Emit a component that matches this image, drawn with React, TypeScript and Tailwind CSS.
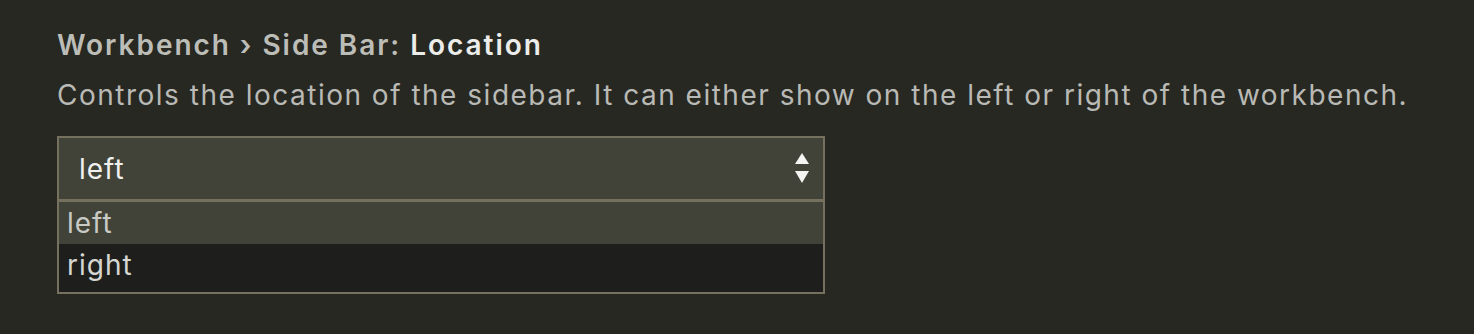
import { useState } from 'react';

const options = ['left', 'right'];

export default function App() {
  const [value] = useState('left');

  return (
    <div
      className="h-[334px] w-full bg-[#272822] pl-[57px] pt-[25px]"
      style={{ fontFamily: 'Inter, "Noto Sans", sans-serif' }}
    >
      <div className="text-[28px] font-semibold leading-[40px] tracking-[1.95px] text-[#bdbdb8]">
        Workbench › Side Bar: <span className="text-[#ececea]">Location</span>
      </div>
      <div className="mt-[10px] text-[28px] leading-[40px] tracking-[1.5px] text-[#b9b9b5]">
        Controls the location of the sidebar. It can either show on the left or right of the workbench.
      </div>

      <div className="mt-[21px] w-[768px] border-2 border-[#75715e]">
        <div className="flex h-[61px] items-center justify-between bg-[#414339] pl-[20px] pr-[12px] text-[28px] tracking-[1px] text-[#f0f0ee]">
          <span>{value}</span>
          <svg width="16" height="32" viewBox="0 0 16 32" className="mr-[1px]">
            <polygon points="8,0 15,11 1,11" fill="#f4f4f2" />
            <polygon points="1,18 15,18 8,30" fill="#f4f4f2" />
          </svg>
        </div>
        <div className="h-[3px] bg-[#75715e]" />
        <div className="text-[28px] leading-[43px] tracking-[1px]">
          {options.map((o) => (
            <div
              key={o}
              className={
                o === value
                  ? 'h-[42px] bg-[#414339] pl-[8px] text-[#c9c9c5]'
                  : 'h-[48px] bg-[#1e1f1c] pl-[8px] text-[#d6d6d2]'
              }
            >
              {o}
            </div>
          ))}
        </div>
      </div>
    </div>
  );
}
